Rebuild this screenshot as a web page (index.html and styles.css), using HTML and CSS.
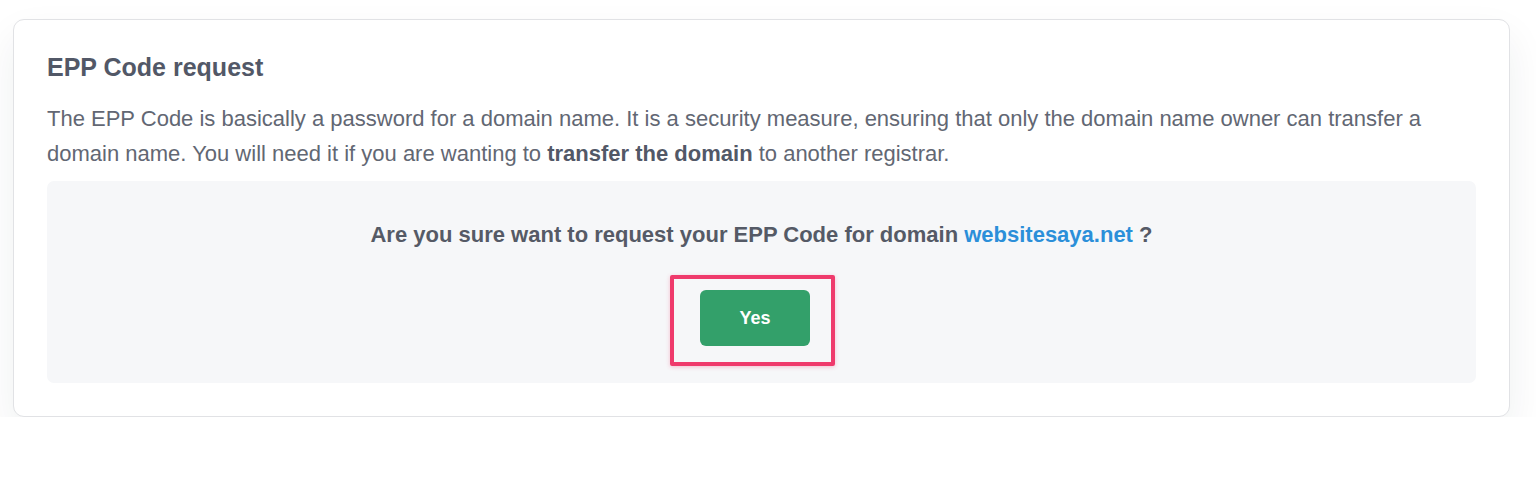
FILE: index.html
```html
<!DOCTYPE html>
<html lang="en">
<head>
<meta charset="utf-8">
<title>EPP Code request</title>
<link rel="stylesheet" href="styles.css">
</head>
<body>
<div class="page">
  <section class="card">
    <h2 class="card-title">EPP Code request</h2>
    <p class="card-text">The EPP Code is basically a password for a domain name. It is a security measure, ensuring that only the domain name owner can transfer a domain name. You will need it if you are wanting to <strong>transfer the domain</strong> to another registrar.</p>
    <div class="confirm">
      <p class="confirm-question">Are you sure want to request your EPP Code for domain <a class="domain-link" href="#">websitesaya.net</a> ?</p>
      <div class="highlight">
        <button class="btn-yes" type="button">Yes</button>
      </div>
    </div>
  </section>
</div>
</body>
</html>
```

FILE: styles.css
```css
* { box-sizing: border-box; }
html, body {
  margin: 0;
  padding: 0;
  background: #ffffff;
}
body {
  font-family: "Liberation Sans", Arial, Helvetica, sans-serif;
  color: #555a66;
}
.page {
  padding: 19px 26px 0 13px;
}
.card {
  background: #fff;
  border: 1px solid #e1e2e5;
  border-radius: 11px;
  box-shadow: 0 18px 40px rgba(30, 40, 60, 0.07);
  padding: 32px 33px 33px 33px;
}
.card-title {
  margin: 0;
  font-size: 25px;
  line-height: 30px;
  font-weight: 700;
  color: #525867;
}
.card-text {
  margin: 19px 0 10px 0;
  font-size: 22px;
  line-height: 35px;
  color: #626773;
}
.card-text strong {
  color: #525867;
}
.confirm {
  background: #f6f7f9;
  border-radius: 7px;
  padding: 40px 0 17px;
  display: flex;
  flex-direction: column;
  align-items: center;
}
.confirm-question {
  margin: 0 0 26px 0;
  font-size: 22px;
  line-height: 28px;
  font-weight: 700;
  color: #555a66;
}
.domain-link {
  color: #2b8fd9;
  text-decoration: none;
}
.highlight {
  margin-right: 18px;
  border: 4px solid #ef3a6c;
  border-radius: 2px;
  padding: 11px 21px 16px 26px;
  box-shadow: 0 1px 4px rgba(239, 58, 108, 0.3);
}
.btn-yes {
  display: block;
  width: 110px;
  height: 56px;
  border: none;
  border-radius: 6px;
  background: #33a06a;
  color: #ffffff;
  font-family: "Liberation Sans", Arial, Helvetica, sans-serif;
  font-size: 18px;
  font-weight: 700;
  cursor: pointer;
}
```
